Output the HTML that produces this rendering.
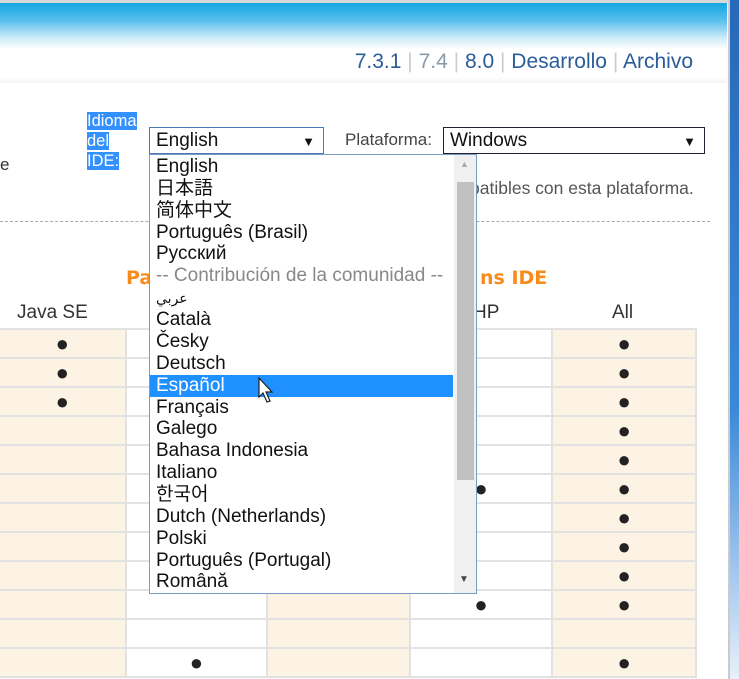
<!DOCTYPE html>
<html><head><meta charset="utf-8"><style>
*{margin:0;padding:0;box-sizing:border-box}
body{width:739px;height:679px;overflow:hidden;background:#fff;font-family:"Liberation Sans","Noto Sans CJK JP",sans-serif;position:relative}
.abs{position:absolute}
.side{left:728px;top:0;width:11px;height:679px;background:linear-gradient(#2868b8,#3a88d8 60%,#e8f0fa 100%);border-left:2px solid #c8ccd0}
.top{left:0;top:0;width:728px;height:3px;background:#d8d8d8}
.hdr{left:0;top:3px;width:727px;height:80px;background:linear-gradient(#14a6e2 0,#5cc0ee 18px,#c8e9f8 34px,#fff 46px,#fff 74px,#f4f4f4 80px)}
.nav{right:46px;top:50px;font-size:21px;color:#2b5c9a;white-space:nowrap}
.nav .s{color:#ccc}.nav .g{color:#8899aa}
.dash{left:0;top:221px;width:710px;border-top:1px dashed #aaa}
.lab{left:87px;top:111px;width:54px;font-size:16.5px;line-height:20px;color:#fff}
.lab span{background:#3390ff}
.sel{height:27px;border:1px solid #333;font-size:19px;padding:2px 6px;color:#111;line-height:22px}
.arr{position:absolute;right:8px;top:3px;font-size:13px}
td{border:2px solid #e2e2e2;height:29px;text-align:center;font-size:22px;color:#222;line-height:20px}
.p{background:#fdf3e4}
.list{left:149px;top:154px;width:328px;height:440px;background:#fff;border:1px solid #7a9cc4}
.it{position:absolute;left:6px;font-size:19px;line-height:22px;color:#111;white-space:nowrap}
</style></head><body>
<div class="abs top"></div>
<div class="abs hdr"></div>
<div class="abs side"></div>
<div class="abs nav">7.3.1 <span class="s">|</span> <span class="g">7.4</span> <span class="s">|</span> 8.0 <span class="s">|</span> Desarrollo <span class="s">|</span> Archivo</div>
<div class="abs" style="left:0;top:155px;font-size:17px;color:#333">e</div>
<div class="abs lab"><span>Idioma</span><br><span>del</span><br><span>IDE:</span></div>
<div class="abs sel" style="left:149px;top:127px;width:175px;border-color:#4a78b8">English<span class="arr">▼</span></div>
<div class="abs" style="left:345px;top:130px;font-size:17px;color:#444">Plataforma:</div>
<div class="abs sel" style="left:443px;top:127px;width:262px;border-color:#223">Windows<span class="arr">▼</span></div>
<div class="abs" style="left:470px;top:178px;font-size:17.5px;color:#555">patibles con esta plataforma.</div>
<div class="abs dash"></div>
<div class="abs" style="left:126px;top:267px;font-size:19px;font-weight:bold;color:#f98b1a;font-family:'DejaVu Sans',sans-serif">Pa</div>
<div class="abs" style="left:480px;top:267px;font-size:19px;font-weight:bold;color:#f98b1a;font-family:'DejaVu Sans',sans-serif">ns IDE</div>
<div class="abs" style="left:17px;top:302px;font-size:19px;color:#333">Java SE</div>
<div class="abs" style="left:473px;top:302px;font-size:19px;color:#333">HP</div>
<div class="abs" style="left:612px;top:302px;font-size:19px;color:#333">All</div>
<table class="abs" style="left:-2px;top:328px;border-collapse:collapse;width:699px">
<colgroup><col style="width:127px"><col style="width:142px"><col style="width:143px"><col style="width:143px"><col style="width:144px"></colgroup>
<tr><td class="p">●</td><td></td><td class="p"></td><td></td><td class="p">●</td></tr>
<tr><td class="p">●</td><td></td><td class="p"></td><td></td><td class="p">●</td></tr>
<tr><td class="p">●</td><td></td><td class="p"></td><td></td><td class="p">●</td></tr>
<tr><td class="p"></td><td></td><td class="p"></td><td></td><td class="p">●</td></tr>
<tr><td class="p"></td><td></td><td class="p"></td><td></td><td class="p">●</td></tr>
<tr><td class="p"></td><td></td><td class="p"></td><td>●</td><td class="p">●</td></tr>
<tr><td class="p"></td><td></td><td class="p"></td><td></td><td class="p">●</td></tr>
<tr><td class="p"></td><td></td><td class="p"></td><td></td><td class="p">●</td></tr>
<tr><td class="p"></td><td></td><td class="p"></td><td></td><td class="p">●</td></tr>
<tr><td class="p"></td><td></td><td class="p"></td><td>●</td><td class="p">●</td></tr>
<tr><td class="p"></td><td></td><td class="p"></td><td></td><td class="p"></td></tr>
<tr><td class="p"></td><td>●</td><td class="p"></td><td></td><td class="p">●</td></tr>
</table>
<div class="abs list">
<div class="abs" style="left:0;top:220px;width:303px;height:22px;background:#1e90ff"></div>
<div class="it" style="top:1px">English</div>
<div class="it" style="top:23px">日本語</div>
<div class="it" style="top:45px">简体中文</div>
<div class="it" style="top:67px">Português (Brasil)</div>
<div class="it" style="top:88px">Русский</div>
<div class="it" style="top:110px;color:#888">-- Contribución de la comunidad --</div>
<div class="it" style="top:132px;font-size:14px">عربي</div>
<div class="it" style="top:154px">Català</div>
<div class="it" style="top:176px">Česky</div>
<div class="it" style="top:198px">Deutsch</div>
<div class="it" style="top:220px;color:#fff">Español</div>
<div class="it" style="top:242px">Français</div>
<div class="it" style="top:263px">Galego</div>
<div class="it" style="top:285px">Bahasa Indonesia</div>
<div class="it" style="top:307px">Italiano</div>
<div class="it" style="top:329px">한국어</div>
<div class="it" style="top:351px">Dutch (Netherlands)</div>
<div class="it" style="top:373px">Polski</div>
<div class="it" style="top:395px">Português (Portugal)</div>
<div class="it" style="top:416px">Română</div>
<div class="abs" style="left:304px;top:0;width:22px;height:438px;background:#f0f0f0">
<div class="abs" style="left:3px;top:27px;width:17px;height:298px;background:#c0c0c0"></div>
<div class="abs" style="left:6px;top:4px;font-size:9px;color:#aaa">▲</div>
<div class="abs" style="left:5px;top:419px;font-size:10px;color:#444">▼</div>
</div>
<svg class="abs" style="left:108px;top:222px" width="18" height="30" viewBox="0 0 18 30"><path d="M1 1 L1 20 L5 16 L9 25 L12 24 L8 15 L14 15 Z" fill="#fff" stroke="#222" stroke-width="1.2"/></svg>
</div>
</body></html>
